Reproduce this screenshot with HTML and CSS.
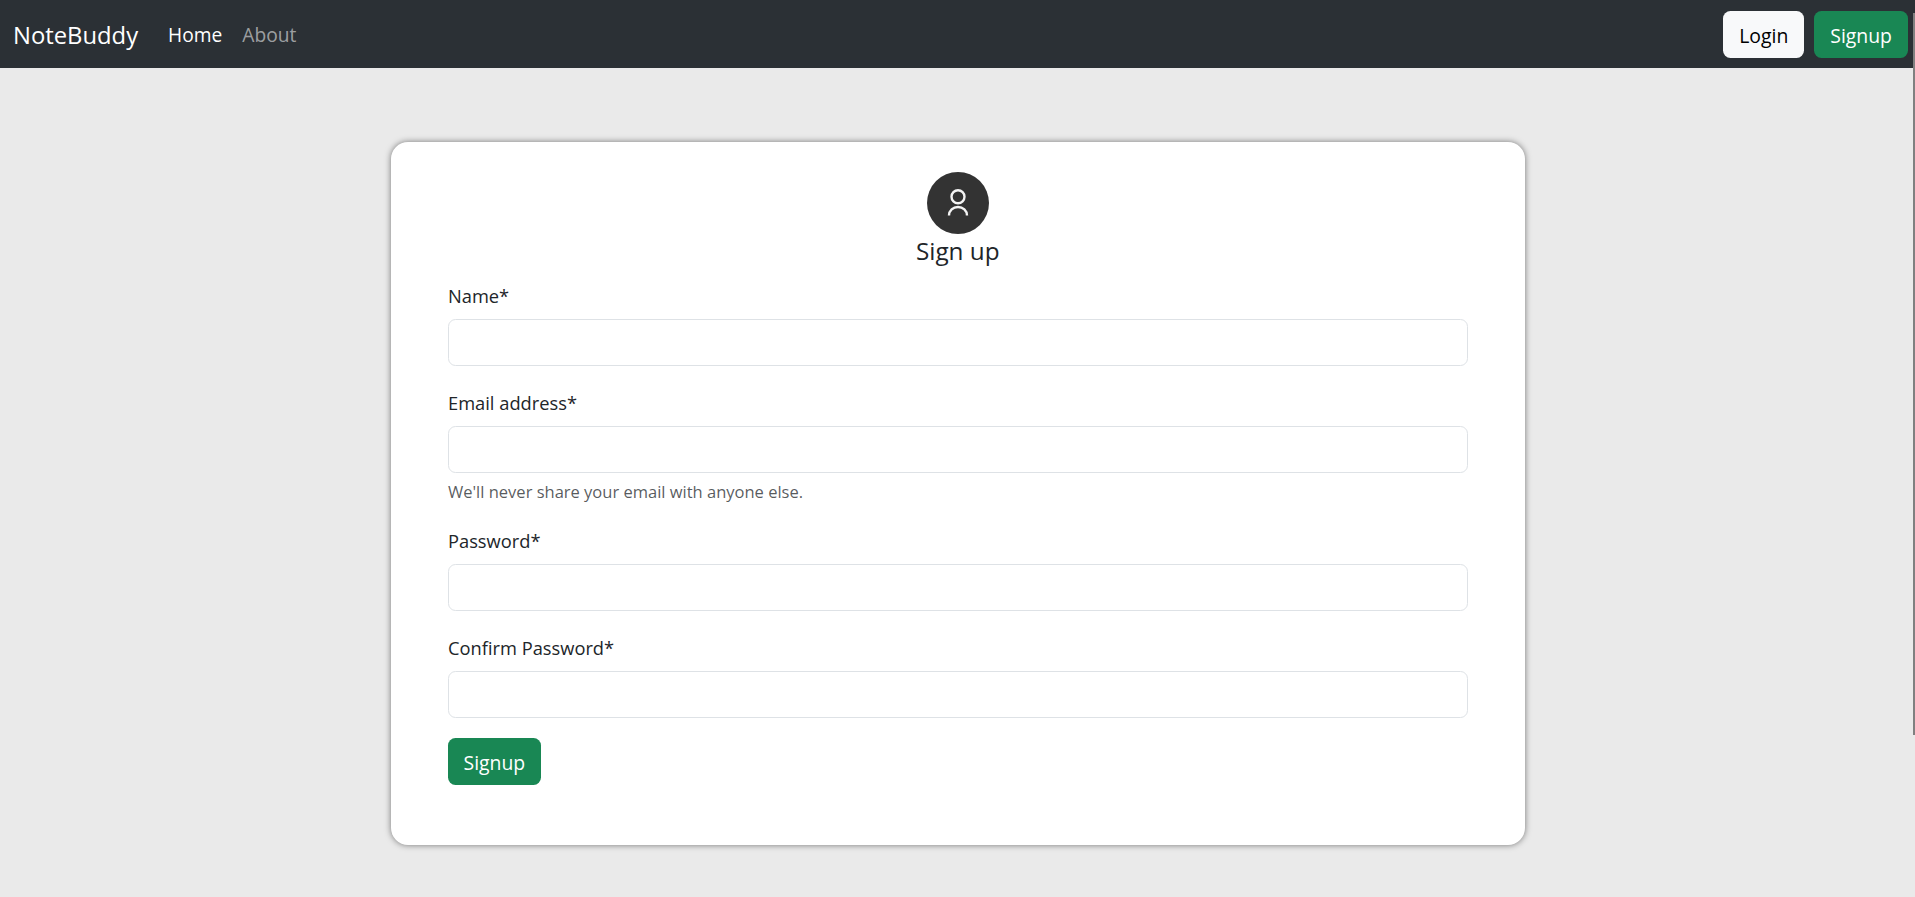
FILE: index.html
```html
<!DOCTYPE html>
<html lang="en">
<head>
  <meta charset="UTF-8" />
  <meta name="viewport" content="width=device-width, initial-scale=1.0"/>
  <title>NoteBuddy</title>
  <link rel="stylesheet" href="styles.css">
</head>
<body>
  <nav class="navbar">
    <a class="brand" href="#">NoteBuddy</a>
    <ul class="nav-links">
      <li><a class="nav-link active" href="#">Home</a></li>
      <li><a class="nav-link" href="#">About</a></li>
    </ul>
    <div class="nav-actions">
      <a class="btn btn-light" href="#">Login</a>
      <a class="btn btn-green" href="#">Signup</a>
    </div>
  </nav>

  <div class="scroll-thumb"></div>

  <main class="card">
    <div class="card-head">
      <div class="avatar">
        <svg width="30" height="30" viewBox="0 0 30 30" fill="none" stroke="#f4f4f4" stroke-width="2.4">
          <circle cx="15" cy="8.7" r="6.5"/>
          <path d="M6 27.5a9 8.5 0 0 1 18 0"/>
        </svg>
      </div>
      <h2 class="card-title">Sign up</h2>
    </div>

    <form>
      <div class="field">
        <label for="name">Name*</label>
        <input type="text" id="name" />
      </div>
      <div class="field">
        <label for="email">Email address*</label>
        <input type="email" id="email" />
        <div class="form-text">We'll never share your email with anyone else.</div>
      </div>
      <div class="field">
        <label for="password">Password*</label>
        <input type="password" id="password" />
      </div>
      <div class="field">
        <label for="cpassword">Confirm Password*</label>
        <input type="password" id="cpassword" />
      </div>
      <button class="btn btn-green btn-submit" type="submit">Signup</button>
    </form>
  </main>
</body>
</html>
```

FILE: styles.css
```css
* {
  margin: 0;
  padding: 0;
  box-sizing: border-box;
}

body {
  height: 897px;
  overflow: hidden;
  background-color: #eaeaea;
  font-family: "Open Sans", "Noto Sans", sans-serif;
  font-size: 18.3px;
  line-height: 30px;
  color: #212529;
}

a {
  text-decoration: none;
}

.navbar {
  display: flex;
  align-items: center;
  height: 68px;
  padding: 0 7px 0 13px;
  background-color: #2b3035;
}

.brand {
  padding-top: 2px;
  font-size: 23.8px;
  color: #fff;
  margin-right: 20px;
}

.nav-links {
  display: flex;
  list-style: none;
}

.nav-link {
  display: block;
  padding: 2px 10px 0;
  font-size: 19.2px;
  color: rgba(255, 255, 255, 0.55);
}

.nav-link.active {
  color: #fff;
}

.nav-actions {
  display: flex;
  gap: 10px;
  margin-left: auto;
}

.btn {
  display: inline-block;
  height: 47px;
  padding: 0 16px;
  border: none;
  border-radius: 7.5px;
  font-family: inherit;
  font-size: 19.4px;
  line-height: 49px;
}

.btn-light {
  background-color: #f8f9fa;
  color: #000;
}

.btn-green {
  background-color: #198754;
  color: #fff;
}

.btn-submit {
  display: block;
  margin-top: 20px;
  padding: 0 15.5px;
}

.scroll-thumb {
  position: absolute;
  top: 13px;
  right: 0;
  width: 2px;
  height: 722px;
  background-color: #808080;
}

.card {
  width: 1134px;
  height: 703px;
  margin: 74px auto 0;
  padding: 30px 57px 0 57.5px;
  background-color: #fff;
  border-radius: 17px;
  box-shadow: 0 0 6px rgba(0, 0, 0, 0.5);
}

.card-head {
  display: flex;
  flex-direction: column;
  align-items: center;
  height: 107px;
}

.avatar {
  display: flex;
  align-items: center;
  justify-content: center;
  width: 62px;
  height: 62px;
  border-radius: 50%;
  background-color: #333;
}

.card-title {
  font-size: 24.3px;
  font-weight: 400;
  line-height: 34px;
}

.field {
  margin-bottom: 20px;
}

.field:last-of-type {
  margin-bottom: 0;
}

label {
  display: block;
  margin-bottom: 7px;
  line-height: 33px;
}

input {
  display: block;
  width: 100%;
  height: 47px;
  border: 1px solid #dee2e6;
  border-radius: 7.5px;
  background-color: #fff;
}

.form-text {
  margin-top: 7px;
  font-size: 16.5px;
  line-height: 24px;
  color: rgba(33, 37, 41, 0.75);
}
```
